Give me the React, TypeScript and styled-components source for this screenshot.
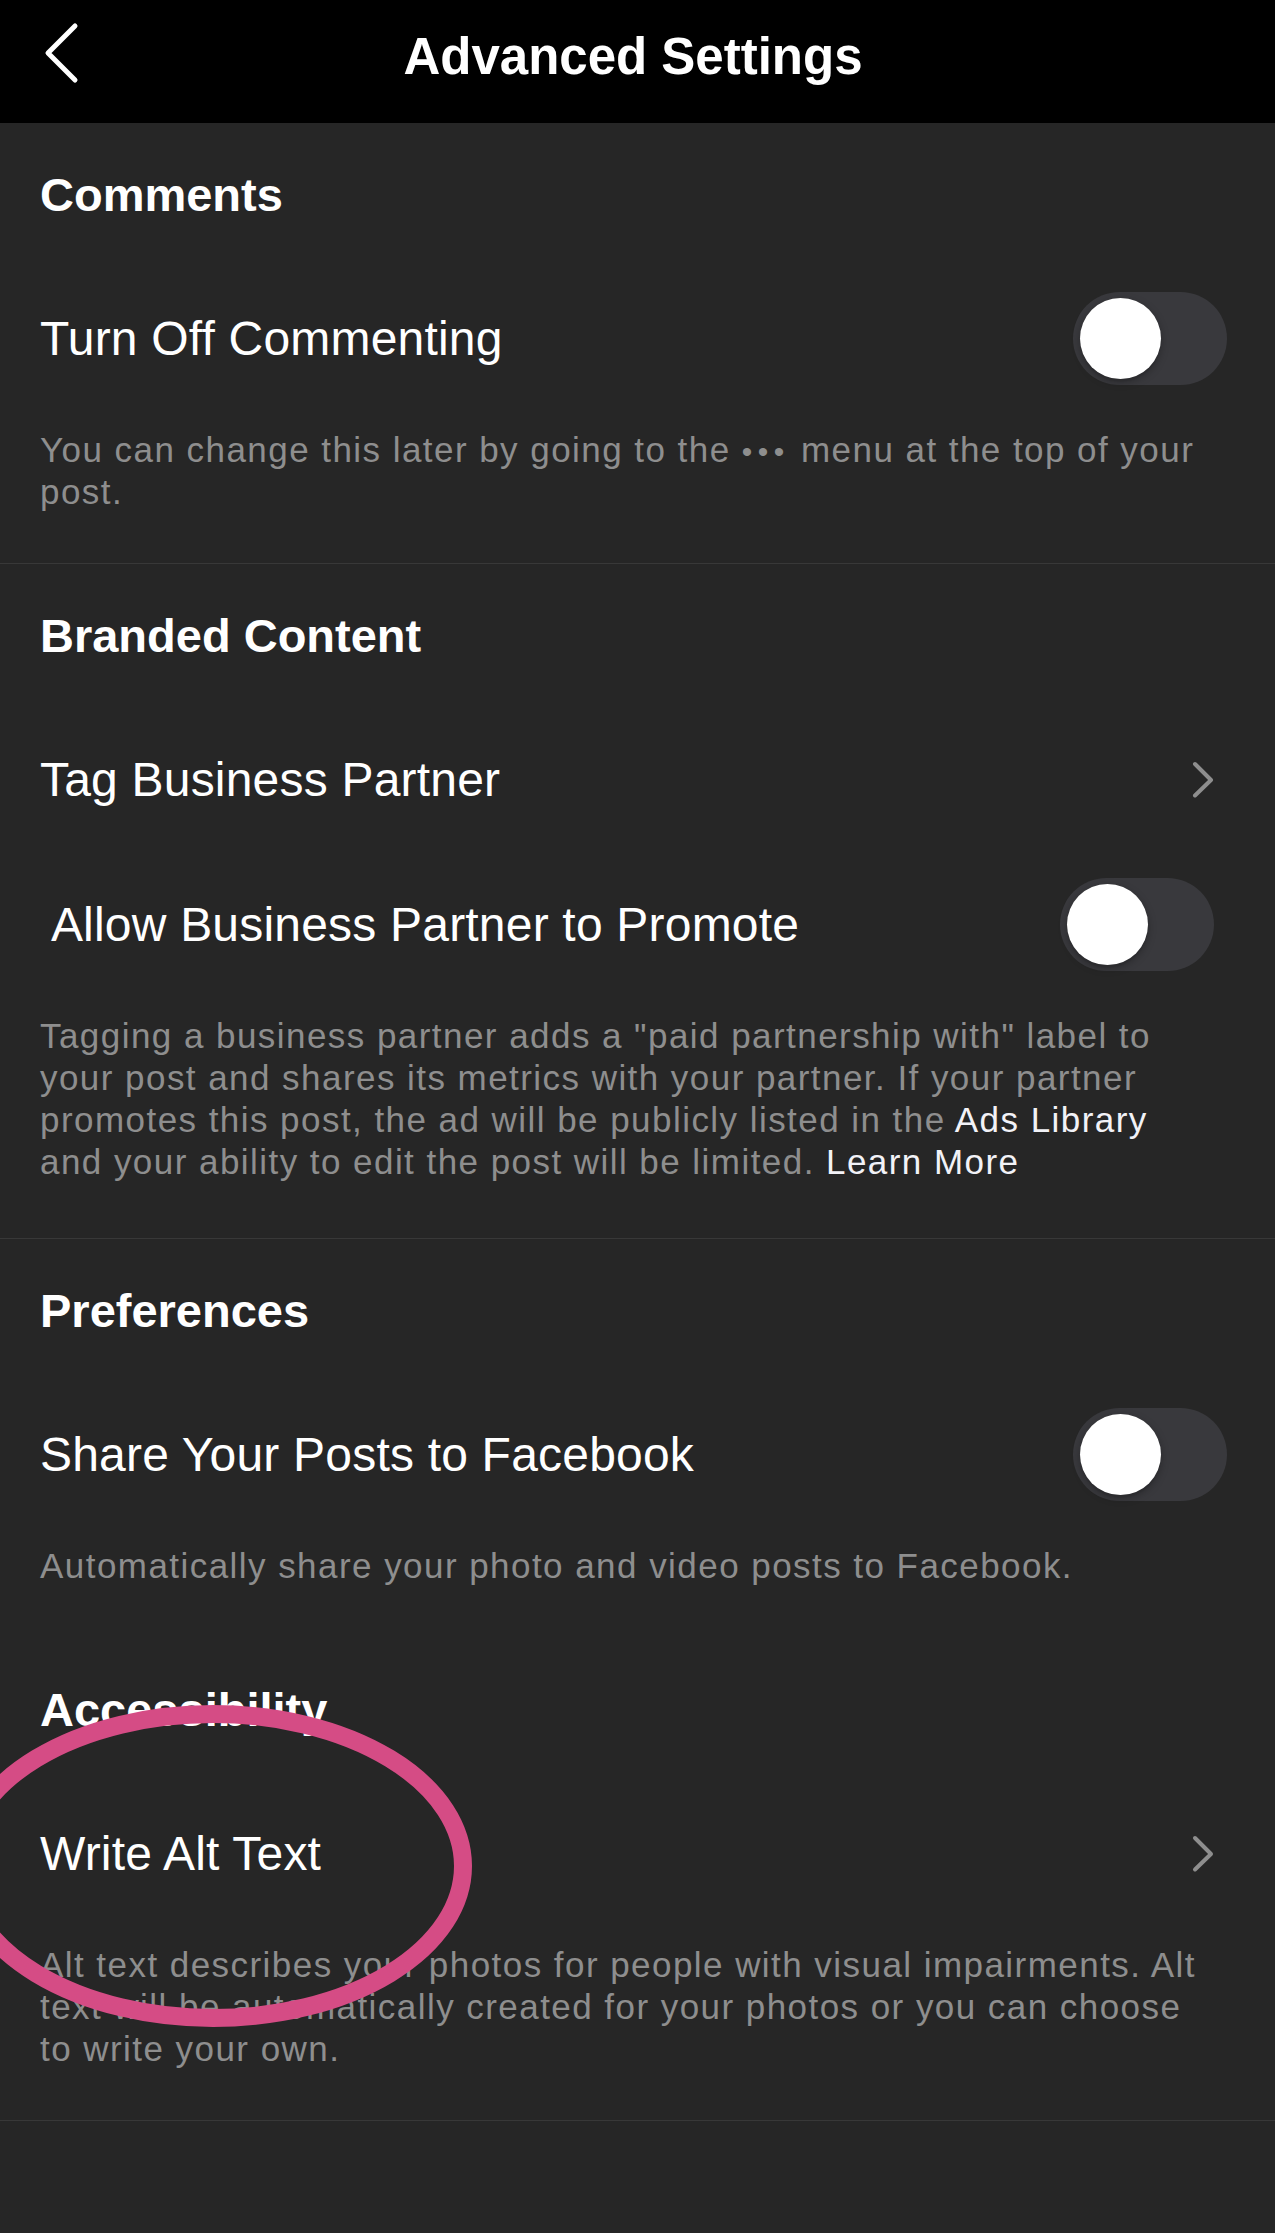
import React from 'react';
import styled, { createGlobalStyle } from 'styled-components';

const GlobalStyle = createGlobalStyle`
  html, body {
    margin: 0;
    padding: 0;
    background: #262626;
  }
  body {
    font-family: 'Liberation Sans', Arial, Helvetica, sans-serif;
    color: #ffffff;
  }
  * {
    box-sizing: border-box;
  }
`;

const Page = styled.div`
  position: relative;
  overflow: hidden;
  width: 1275px;
  min-height: 2233px;
  background: #262626;
`;

const Header = styled.header`
  height: 123px;
  background: #000000;
  display: grid;
  grid-template-columns: 1fr auto 1fr;
  align-items: center;
  padding-bottom: 10px;
`;

const BackButton = styled.button`
  justify-self: start;
  align-self: start;
  margin: 21px 0 0 44px;
  padding: 0;
  border: 0;
  background: none;
  width: 40px;
  height: 64px;
  display: block;
  cursor: pointer;
`;

const Title = styled.h1`
  margin: 0 9px 0 0;
  font-size: 51px;
  line-height: 1;
  font-weight: 700;
  color: #ffffff;
`;

const Section = styled.section<{ $pad: number; $divider?: boolean }>`
  padding-bottom: ${(p) => p.$pad}px;
  border-bottom: ${(p) => (p.$divider ? '1px solid #383838' : 'none')};
`;

const Heading = styled.h2`
  margin: 0;
  height: 143px;
  display: flex;
  align-items: center;
  padding-left: 40px;
  font-size: 47px;
  line-height: 1;
  font-weight: 700;
  color: #ffffff;
`;

const Row = styled.div<{ $right?: number }>`
  height: 145px;
  display: flex;
  align-items: center;
  justify-content: space-between;
  padding: 0 ${(p) => p.$right ?? 48}px 0 40px;
`;

const Label = styled.span`
  font-size: 48px;
  line-height: 1;
  letter-spacing: 0.2px;
  color: #ffffff;
  white-space: pre;
`;

const Track = styled.div<{ $on?: boolean }>`
  position: relative;
  width: 154px;
  height: 93px;
  border-radius: 47px;
  background: ${(p) => (p.$on ? '#34c759' : '#39393d')};
  flex-shrink: 0;
`;

const Knob = styled.div<{ $on?: boolean }>`
  position: absolute;
  top: 6px;
  left: ${(p) => (p.$on ? 67 : 7)}px;
  width: 81px;
  height: 81px;
  border-radius: 50%;
  background: #ffffff;
  box-shadow: 0 3px 8px rgba(0, 0, 0, 0.28), 0 3px 1px rgba(0, 0, 0, 0.06);
`;

const Description = styled.p`
  margin: 18px 0 0;
  padding: 0 40px;
  font-size: 35px;
  line-height: 42px;
  letter-spacing: 1.45px;
  color: #8e8e8e;
  white-space: nowrap;
`;

const Link = styled.span`
  color: #f2f2f7;
`;

const Dots = styled.span`
  font-size: 30px;
  line-height: 1;
  letter-spacing: 5.5px;
`;

const Circle = styled.svg`
  position: absolute;
  left: 0;
  top: 1690px;
  width: 500px;
  height: 350px;
  pointer-events: none;
`;

function Toggle({ on }: { on?: boolean }) {
  return (
    <Track $on={on}>
      <Knob $on={on} />
    </Track>
  );
}

function Chevron() {
  return (
    <svg width="24" height="40" viewBox="0 0 24 40" fill="none">
      <path d="M4 4 L20 20 L4 35.5" stroke="#8e8e8e" strokeWidth="4" strokeLinecap="round" strokeLinejoin="round" />
    </svg>
  );
}

export default function App() {
  return (
    <>
      <GlobalStyle />
      <Page>
        <Header>
          <BackButton aria-label="Back">
            <svg width="40" height="64" viewBox="0 0 40 64" fill="none">
              <path d="M31 5 L4 32 L31 59" stroke="#ffffff" strokeWidth="5" strokeLinecap="round" strokeLinejoin="round" />
            </svg>
          </BackButton>
          <Title>Advanced Settings</Title>
          <div />
        </Header>

        <Section $pad={50} $divider>
          <Heading>Comments</Heading>
          <Row>
            <Label>Turn Off Commenting</Label>
            <Toggle />
          </Row>
          <Description>
            You can change this later by going to the <Dots>•••</Dots> menu at the top of your
            <br />
            post.
          </Description>
        </Section>

        <Section $pad={55} $divider>
          <Heading>Branded Content</Heading>
          <Row $right={60}>
            <Label>Tag Business Partner</Label>
            <Chevron />
          </Row>
          <Row $right={61}>
            <Label> Allow Business Partner to Promote</Label>
            <Toggle />
          </Row>
          <Description>
            Tagging a business partner adds a "paid partnership with" label to
            <br />
            your post and shares its metrics with your partner. If your partner
            <br />
            promotes this post, the ad will be publicly listed in the <Link>Ads Library</Link>
            <br />
            and your ability to edit the post will be limited. <Link>Learn More</Link>
          </Description>
        </Section>

        <Section $pad={51}>
          <Heading>Preferences</Heading>
          <Row>
            <Label>Share Your Posts to Facebook</Label>
            <Toggle />
          </Row>
          <Description>Automatically share your photo and video posts to Facebook.</Description>
        </Section>

        <Section $pad={50} $divider>
          <Heading>Accessibility</Heading>
          <Row $right={60}>
            <Label>Write Alt Text</Label>
            <Chevron />
          </Row>
          <Description>
            Alt text describes your photos for people with visual impairments. Alt
            <br />
            text will be automatically created for your photos or you can choose
            <br />
            to write your own.
          </Description>
        </Section>

        <Circle viewBox="0 0 500 350">
          <ellipse cx="213" cy="176" rx="250" ry="152" fill="none" stroke="#d54c85" strokeWidth="18" />
        </Circle>
      </Page>
    </>
  );
}
